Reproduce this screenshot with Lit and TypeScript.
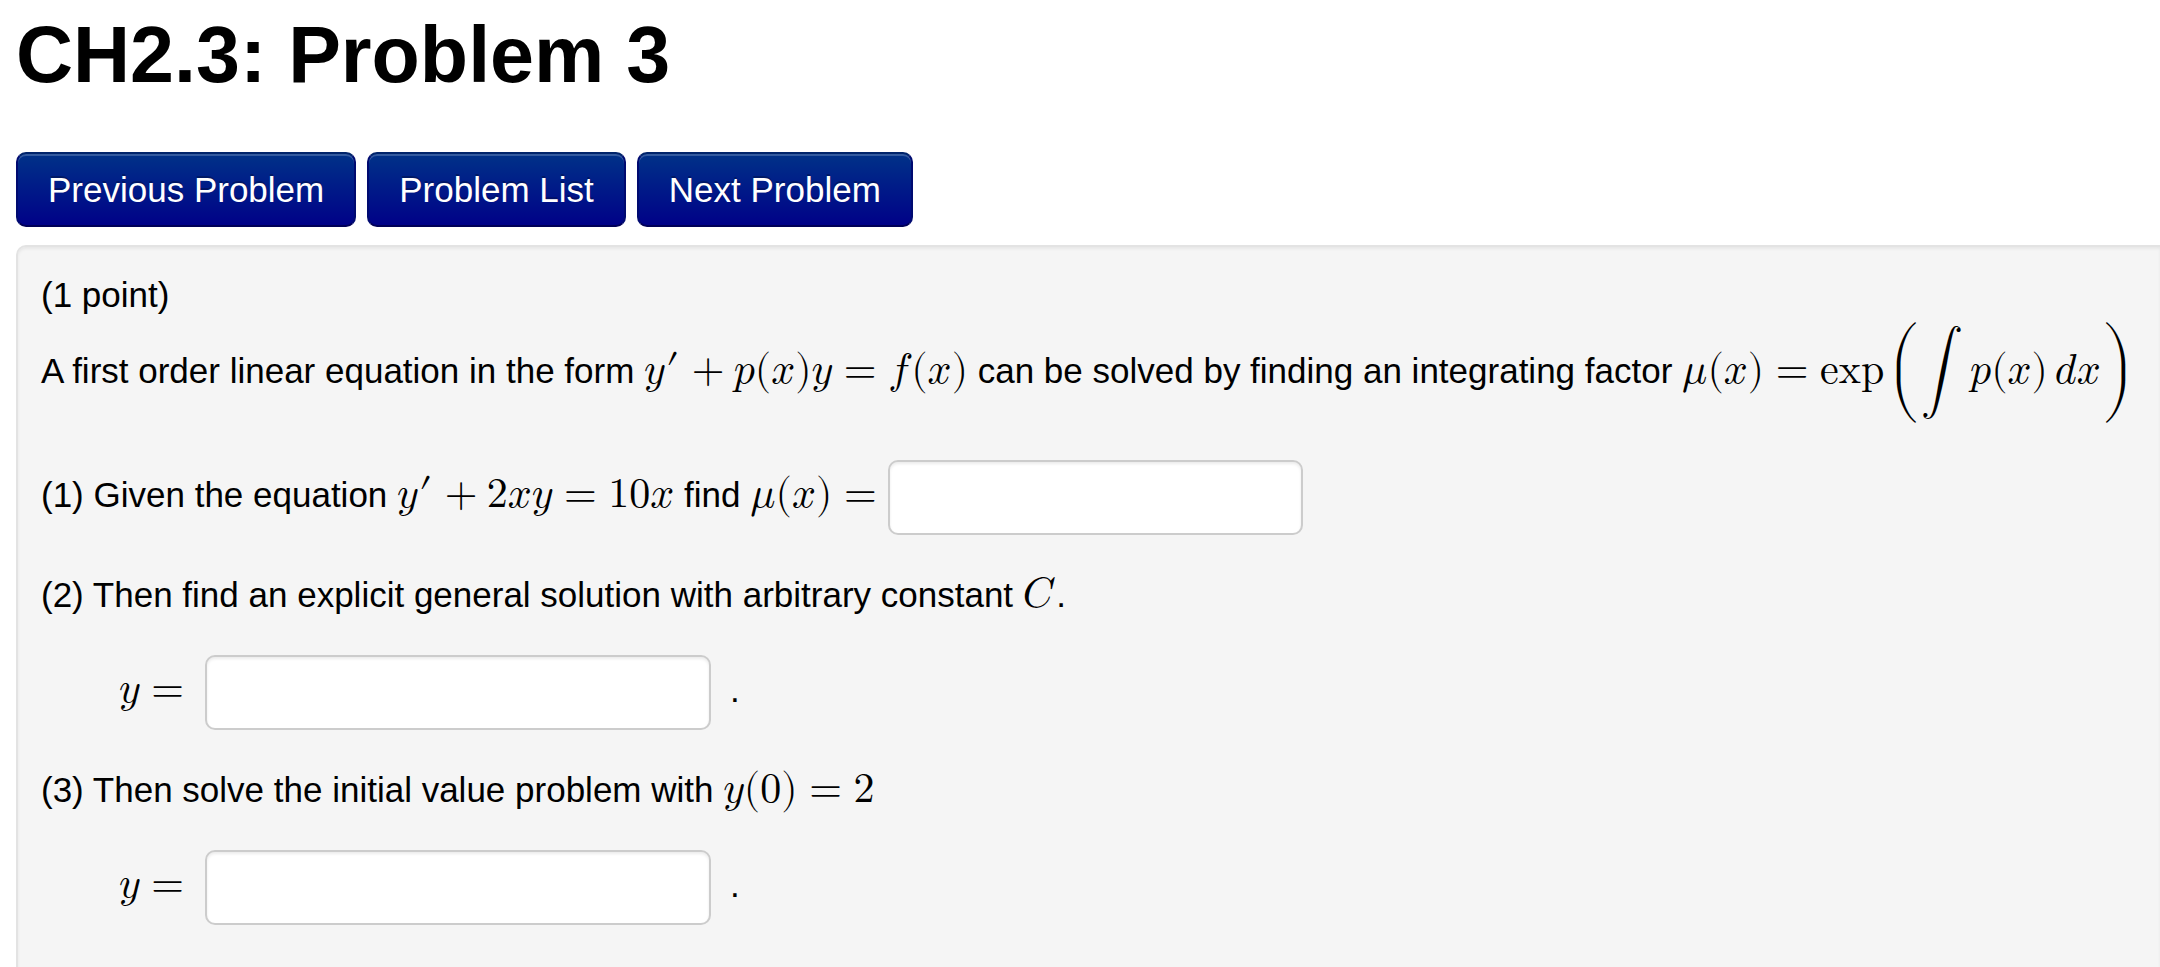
import { LitElement, html, css, mathml } from "lit";
import { customElement } from "lit/decorators.js";

const call = (fn: string, arg: unknown) => mathml`<mi>${fn}</mi><mo stretchy="false">(</mo>${arg}<mo stretchy="false">)</mo>`;
const ofX = (fn: string) => call(fn, mathml`<mi>x</mi>`);
const yPrime = mathml`<mi>y</mi><mo lspace="0.03em" rspace="0.08em">′</mo>`;

@customElement("app-root")
export class AppRoot extends LitElement {
  static styles = css`
    :host {
      display: block;
      min-height: 100vh;
      overflow: hidden;
      background: #fff;
      color: #000;
      font: 35px/50px "Liberation Sans", Arial, sans-serif;
    }
    .page {
      display: flex;
      flex-direction: column;
      min-height: 100vh;
      padding-left: 16px;
      box-sizing: border-box;
    }
    h1 {
      margin: 0;
      padding: 5px 0 47px;
      font-size: 79px;
      line-height: 100px;
    }
    nav {
      display: flex;
      gap: 11px;
      margin-bottom: 18px;
    }
    nav button {
      font: inherit;
      line-height: 51px;
      color: #fff;
      padding: 10px 30px;
      border: 2px solid;
      border-color: #00246b #000a70 #000058;
      border-radius: 10px;
      background: linear-gradient(#003388, #000088) border-box;
      box-shadow: inset 0 2px 0 rgba(255, 255, 255, 0.2);
      text-shadow: 0 -2px 0 rgba(0, 0, 0, 0.25);
    }
    .problem {
      flex: 1;
      padding: 23px;
      border: 2px solid #e3e3e3;
      border-width: 2px 0 0 2px;
      border-radius: 10px 0 0 0;
      background: #f5f5f5;
      box-shadow: inset 0 2px 3px rgba(0, 0, 0, 0.06);
    }
    p {
      margin: 0 0 35px;
      white-space: nowrap;
    }
    .points {
      margin: 0;
    }
    .intro {
      line-height: 102px;
      margin-bottom: 37px;
    }
    .answer {
      padding-left: 78px;
    }
    math {
      font-family: "Latin Modern Math", math;
      font-size: 42px;
      line-height: 42px;
    }
    input {
      box-sizing: border-box;
      width: 506px;
      height: 75px;
      margin: 0 9px 0 0;
      padding: 10px 15px;
      vertical-align: middle;
      font: inherit;
      border: 2px solid #ccc;
      border-radius: 10px;
      background: #fff;
      box-shadow: inset 0 2px 3px rgba(0, 0, 0, 0.08);
    }
    .short {
      width: 415px;
    }
  `;

  render() {
    return html`
      <div class="page">
        <h1>CH2.3: Problem 3</h1>
        <nav>
          <button type="button">Previous Problem</button>
          <button type="button">Problem List</button>
          <button type="button">Next Problem</button>
        </nav>
        <main class="problem">
          <p class="points">(1 point)</p>
          <p class="intro">
            A first order linear equation in the form
            <math><mrow>${yPrime}<mo>+</mo>${ofX("p")}<mi>y</mi><mo>=</mo><mi>f</mi><mspace width="0.06em"></mspace><mo stretchy="false">(</mo><mi>x</mi><mo stretchy="false">)</mo></mrow></math>
            can be solved by finding an integrating factor
            <math displaystyle="true"><mrow>${ofX("μ")}<mo>=</mo><mi>exp</mi><mrow><mo>(</mo><mspace width="-0.08em"></mspace><mo lspace="0">∫</mo>${ofX("p")}<mspace width="0.167em"></mspace><mi>d</mi><mi>x</mi><mspace width="-0.08em"></mspace><mo>)</mo></mrow></mrow></math>
          </p>
          <p>
            <label for="mu">(1) Given the equation
              <math><mrow>${yPrime}<mo>+</mo><mn>2</mn><mi>x</mi><mi>y</mi><mo>=</mo><mn>10</mn><mi>x</mi></mrow></math>
              find
              <math><mrow>${ofX("μ")}<mo>=</mo></mrow></math></label><input class="short" id="mu" type="text" />
          </p>
          <p>(2) Then find an explicit general solution with arbitrary constant <math><mi>C</mi><mspace width="0.08em"></mspace></math>.</p>
          <p class="answer">
            <label for="general"><math><mrow><mi>y</mi><mo>=</mo></mrow></math></label>
            <input id="general" type="text" />
            .
          </p>
          <p>
            (3) Then solve the initial value problem with
            <math><mrow>${call("y", mathml`<mn>0</mn>`)}<mo>=</mo><mn>2</mn></mrow></math>
          </p>
          <p class="answer">
            <label for="particular"><math><mrow><mi>y</mi><mo>=</mo></mrow></math></label>
            <input id="particular" type="text" />
            .
          </p>
        </main>
      </div>
    `;
  }
}
